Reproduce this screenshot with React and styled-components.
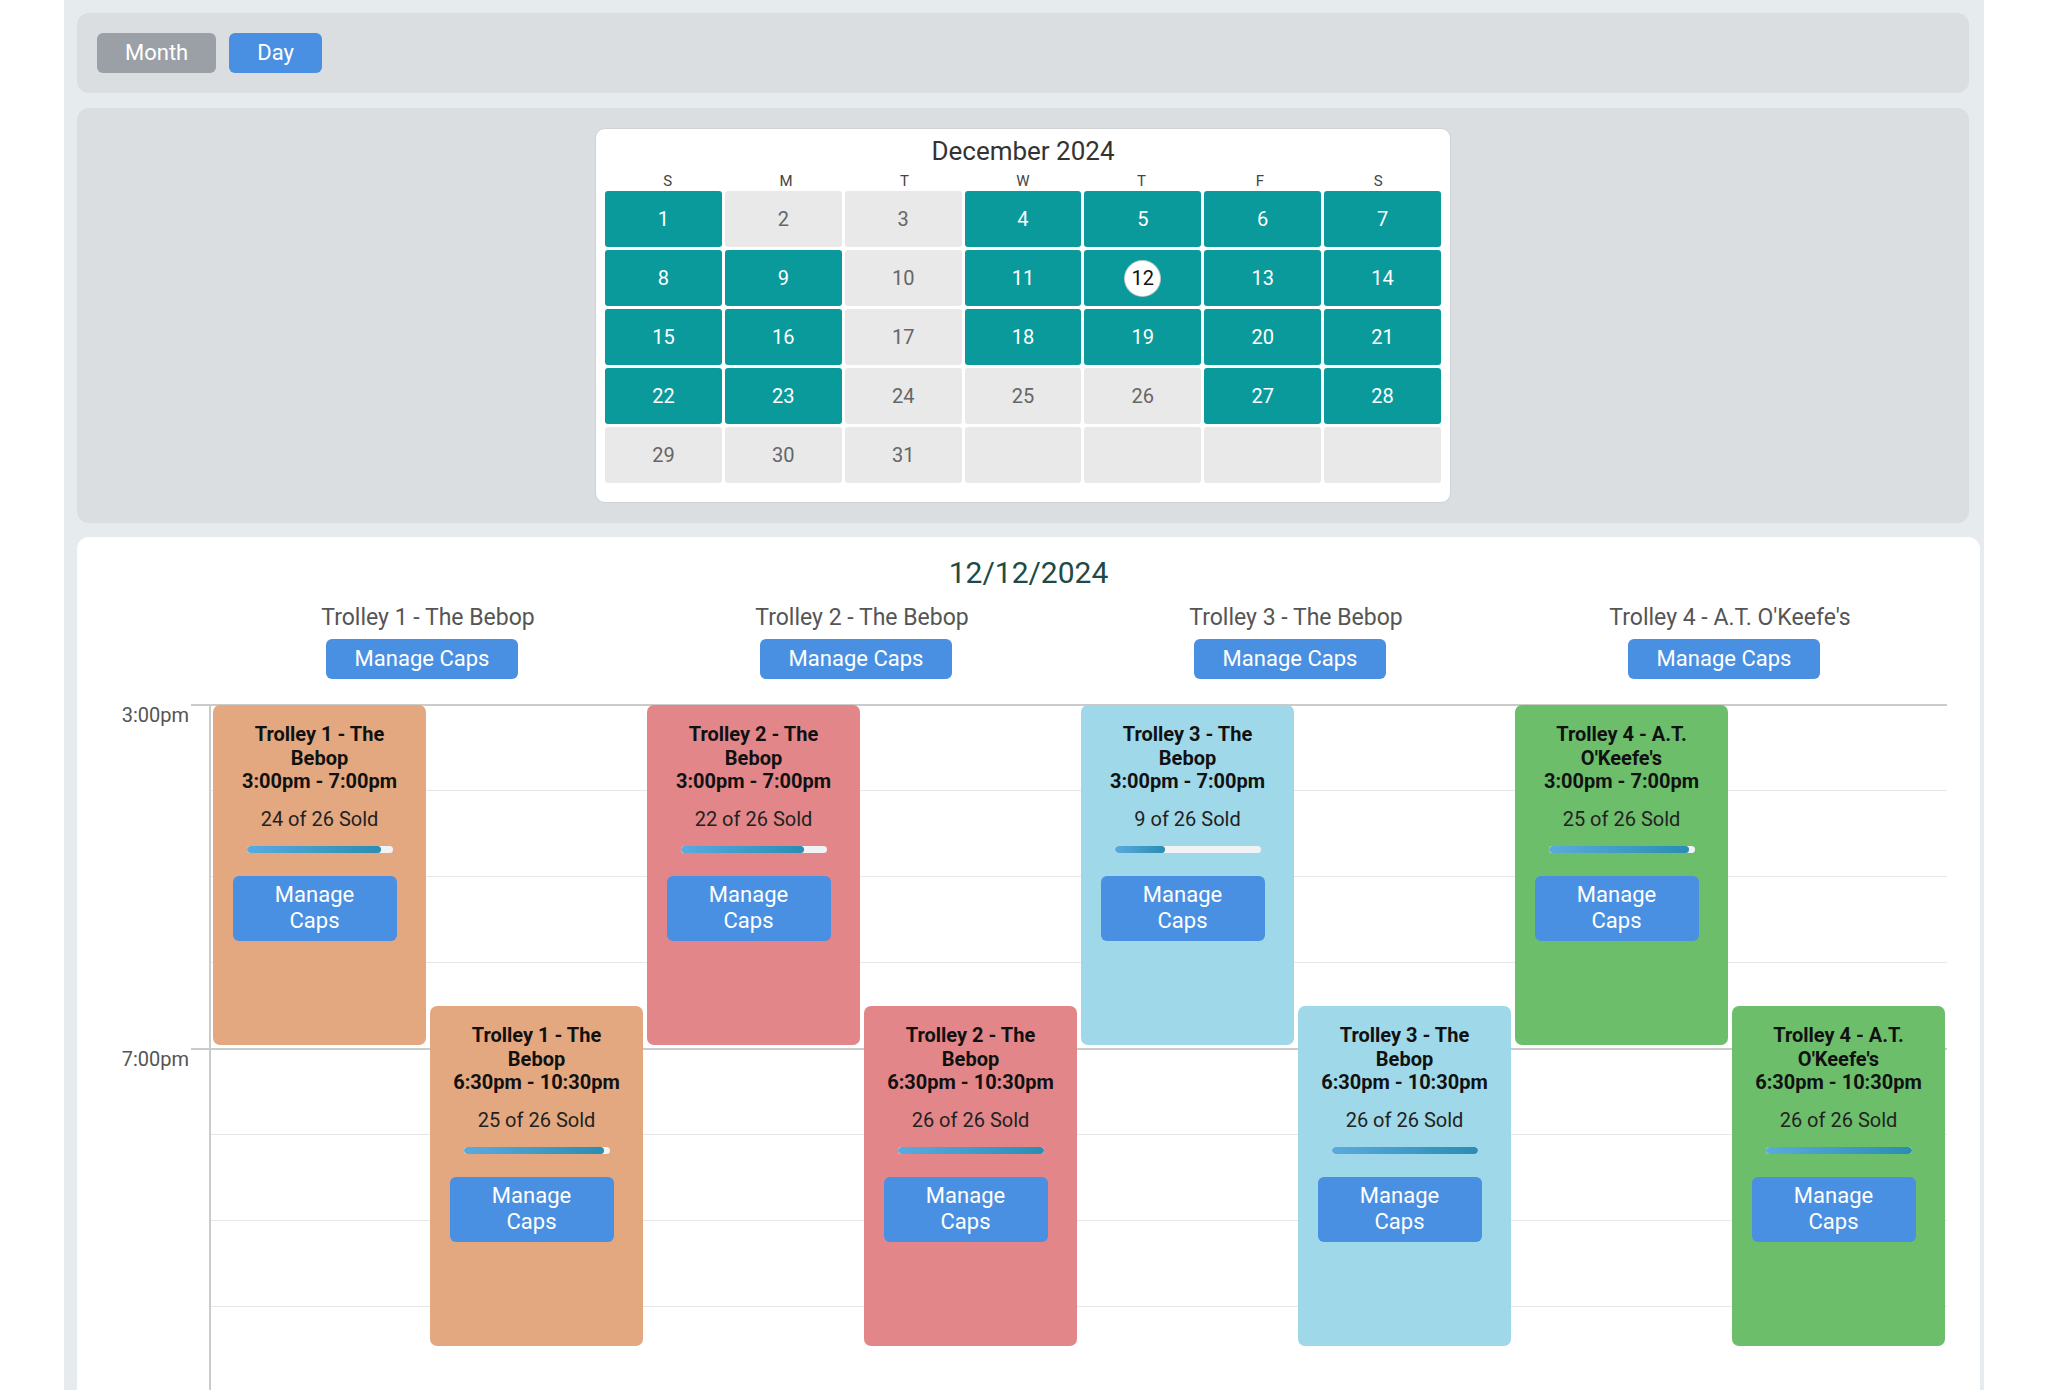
import React from 'react';
import styled, { createGlobalStyle } from 'styled-components';

const GlobalStyle = createGlobalStyle`
  * { box-sizing: border-box; }
  body {
    margin: 0;
    background: #ffffff;
    font-family: Roboto, "Liberation Sans", Arial, sans-serif;
  }
  button { font-family: inherit; cursor: pointer; }
`;

const Page = styled.div`
  width: 1920px;
  margin: 0 auto;
  min-height: 100vh;
  background: #e6ebee;
  padding: 13px 4px 0 13px;
  display: flex;
  flex-direction: column;
`;

const Toolbar = styled.div`
  height: 80px;
  margin-right: 11px;
  background: #dadee1;
  border-radius: 12px;
  padding: 20px;
  display: flex;
  gap: 13px;
  align-items: flex-start;
`;

const ViewButton = styled.button`
  height: 40px;
  padding: 0 28px;
  border: none;
  border-radius: 6px;
  background: ${(p) => (p.$active ? '#4a90e2' : '#9aa0a5')};
  color: #ffffff;
  font-size: 22px;
  line-height: 40px;
`;

const CalendarPanel = styled.div`
  margin-top: 15px;
  margin-right: 11px;
  height: 415px;
  background: #dadee1;
  border-radius: 12px;
  padding: 20px 0 0;
  display: flex;
  justify-content: center;
  align-items: flex-start;
`;

const CalendarCard = styled.div`
  width: 856px;
  background: #ffffff;
  border: 1px solid #cfd3d6;
  border-radius: 10px;
  padding: 7px 9px 19px;
`;

const MonthTitle = styled.div`
  text-align: center;
  font-size: 26px;
  line-height: 30px;
  color: #333333;
`;

const WeekHeader = styled.div`
  display: grid;
  grid-template-columns: repeat(7, 1fr);
  gap: 3px;
  height: 25px;
  padding: 0 5px;
  font-size: 15px;
  line-height: 31px;
  color: #444444;
  text-align: center;
`;

const DaysGrid = styled.div`
  display: grid;
  grid-template-columns: repeat(7, 1fr);
  grid-auto-rows: 56px;
  gap: 3px;
`;

const DayCell = styled.div`
  border-radius: 3px;
  background: ${(p) => (p.$open ? '#0b9a9c' : '#e9e9e9')};
  color: ${(p) => (p.$open ? '#ffffff' : '#666666')};
  display: flex;
  align-items: center;
  justify-content: center;
  font-size: 20px;
`;

const TodayMark = styled.span`
  width: 35px;
  height: 35px;
  border-radius: 50%;
  background: #ffffff;
  color: #111111;
  box-shadow: 0 0 0 1px #c4c8ca;
  display: flex;
  align-items: center;
  justify-content: center;
`;

const DayPanel = styled.div`
  flex: 1;
  margin-top: 14px;
  background: #ffffff;
  border-radius: 12px 12px 0 0;
  padding: 19px 0 0;
`;

const DateTitle = styled.div`
  text-align: center;
  font-size: 30px;
  line-height: 34px;
  color: #1e4a47;
`;

const HeaderRow = styled.div`
  margin-top: 15px;
  display: grid;
  grid-template-columns: 134px repeat(4, 434px);
`;

const HeaderCell = styled.div`
  display: flex;
  flex-direction: column;
  align-items: center;
  gap: 8px;
`;

const TrolleyName = styled.div`
  font-size: 23px;
  line-height: 26px;
  color: #555555;
`;

const HeaderButton = styled.button`
  width: 192px;
  height: 40px;
  margin-right: 12px;
  border: none;
  border-radius: 6px;
  background: #4a90e2;
  color: #ffffff;
  font-size: 22px;
  line-height: 40px;
  padding: 0;
`;

const Board = styled.div`
  margin-top: 25px;
  display: grid;
  grid-template-columns: 114px 20px repeat(8, 217px);
  grid-template-rows: repeat(16, 43px);
`;

const TimeLabel = styled.div`
  grid-column: 1;
  grid-row: ${(p) => p.$row};
  align-self: start;
  text-align: right;
  padding-right: 2px;
  font-size: 20px;
  line-height: 22px;
  color: #555555;
`;

const GridLine = styled.div`
  grid-column: ${(p) => (p.$major ? '2 / -1' : '3 / -1')};
  grid-row: ${(p) => p.$row};
  align-self: start;
  height: 0;
  border-top: ${(p) => (p.$major ? '2px solid #cbcbcb' : '1px solid #e7e7e7')};
`;

const Axis = styled.div`
  grid-column: 2;
  grid-row: 1 / -1;
  justify-self: end;
  width: 2px;
  background: #cbcbcb;
`;

const EventCard = styled.div`
  grid-column: ${(p) => p.$col};
  grid-row: ${(p) => p.$start} / ${(p) => p.$end};
  margin: 1px 2px 3px;
  border-radius: 7px;
  background: ${(p) => p.$color};
  padding: 18px 18px 0;
  display: flex;
  flex-direction: column;
  align-items: center;
  text-align: center;
`;

const EventTitle = styled.div`
  font-weight: 700;
  font-size: 20px;
  line-height: 23.5px;
  color: #111111;
`;

const EventSold = styled.div`
  margin-top: 14px;
  font-size: 20px;
  line-height: 23.5px;
  color: #222222;
`;

const ProgressTrack = styled.div`
  margin-top: 14.5px;
  width: 146px;
  height: 7px;
  border-radius: 4px;
  background: #f0f2f3;
  overflow: hidden;
`;

const ProgressFill = styled.div`
  height: 100%;
  border-radius: 4px;
  background: linear-gradient(90deg, #5aaadf, #2a8db3);
`;

const EventButton = styled.button`
  margin-top: 23px;
  margin-right: 10px;
  width: 164px;
  height: 65px;
  padding: 0 20px;
  border: none;
  border-radius: 6px;
  background: #4a90e2;
  color: #ffffff;
  font-size: 22px;
  line-height: 26px;
`;

const openDays = new Set([1, 4, 5, 6, 7, 8, 9, 11, 12, 13, 14, 15, 16, 18, 19, 20, 21, 22, 23, 27, 28]);
const weekLetters = ['S', 'M', 'T', 'W', 'T', 'F', 'S'];

const trolleys = [
  { name: 'Trolley 1 - The Bebop', color: '#e4a880', sold: [24, 25] },
  { name: 'Trolley 2 - The Bebop', color: '#e2868a', sold: [22, 26] },
  { name: 'Trolley 3 - The Bebop', color: '#9fd8e8', sold: [9, 26] },
  { name: "Trolley 4 - A.T. O'Keefe's", color: '#6cbe6b', sold: [25, 26] },
];

const shifts = [
  { time: '3:00pm - 7:00pm', start: 1, end: 9, sub: 0 },
  { time: '6:30pm - 10:30pm', start: 8, end: 16, sub: 1 },
];

const CAP = 26;

export default function App() {
  const cells = [];
  for (let d = 1; d <= 31; d++) cells.push(d);
  while (cells.length < 35) cells.push(null);

  const lines = [];
  for (let h = 0; h < 8; h++) {
    lines.push({ row: 1 + h * 2, major: h % 4 === 0 });
  }

  return (
    <>
      <GlobalStyle />
      <Page>
        <Toolbar>
          <ViewButton>Month</ViewButton>
          <ViewButton $active>Day</ViewButton>
        </Toolbar>

        <CalendarPanel>
          <CalendarCard>
            <MonthTitle>December 2024</MonthTitle>
            <WeekHeader>
              {weekLetters.map((l, i) => (
                <div key={i}>{l}</div>
              ))}
            </WeekHeader>
            <DaysGrid>
              {cells.map((d, i) => (
                <DayCell key={i} $open={d !== null && openDays.has(d)}>
                  {d === 12 ? <TodayMark>12</TodayMark> : d}
                </DayCell>
              ))}
            </DaysGrid>
          </CalendarCard>
        </CalendarPanel>

        <DayPanel>
          <DateTitle>12/12/2024</DateTitle>
          <HeaderRow>
            <div />
            {trolleys.map((t) => (
              <HeaderCell key={t.name}>
                <TrolleyName>{t.name}</TrolleyName>
                <HeaderButton>Manage Caps</HeaderButton>
              </HeaderCell>
            ))}
          </HeaderRow>

          <Board>
            <TimeLabel $row={1}>3:00pm</TimeLabel>
            <TimeLabel $row={9}>7:00pm</TimeLabel>
            {lines.map((l) => (
              <GridLine key={l.row} $row={l.row} $major={l.major} />
            ))}
            <Axis />
            {trolleys.map((t, ti) =>
              shifts.map((s, si) => {
                const sold = t.sold[si];
                return (
                  <EventCard
                    key={t.name + s.time}
                    $col={3 + ti * 2 + s.sub}
                    $start={s.start}
                    $end={s.end}
                    $color={t.color}
                  >
                    <EventTitle>
                      {t.name}
                      <br />
                      {s.time}
                    </EventTitle>
                    <EventSold>{sold} of {CAP} Sold</EventSold>
                    <ProgressTrack>
                      <ProgressFill style={{ width: `${(sold / CAP) * 100}%` }} />
                    </ProgressTrack>
                    <EventButton>Manage Caps</EventButton>
                  </EventCard>
                );
              })
            )}
          </Board>
        </DayPanel>
      </Page>
    </>
  );
}
